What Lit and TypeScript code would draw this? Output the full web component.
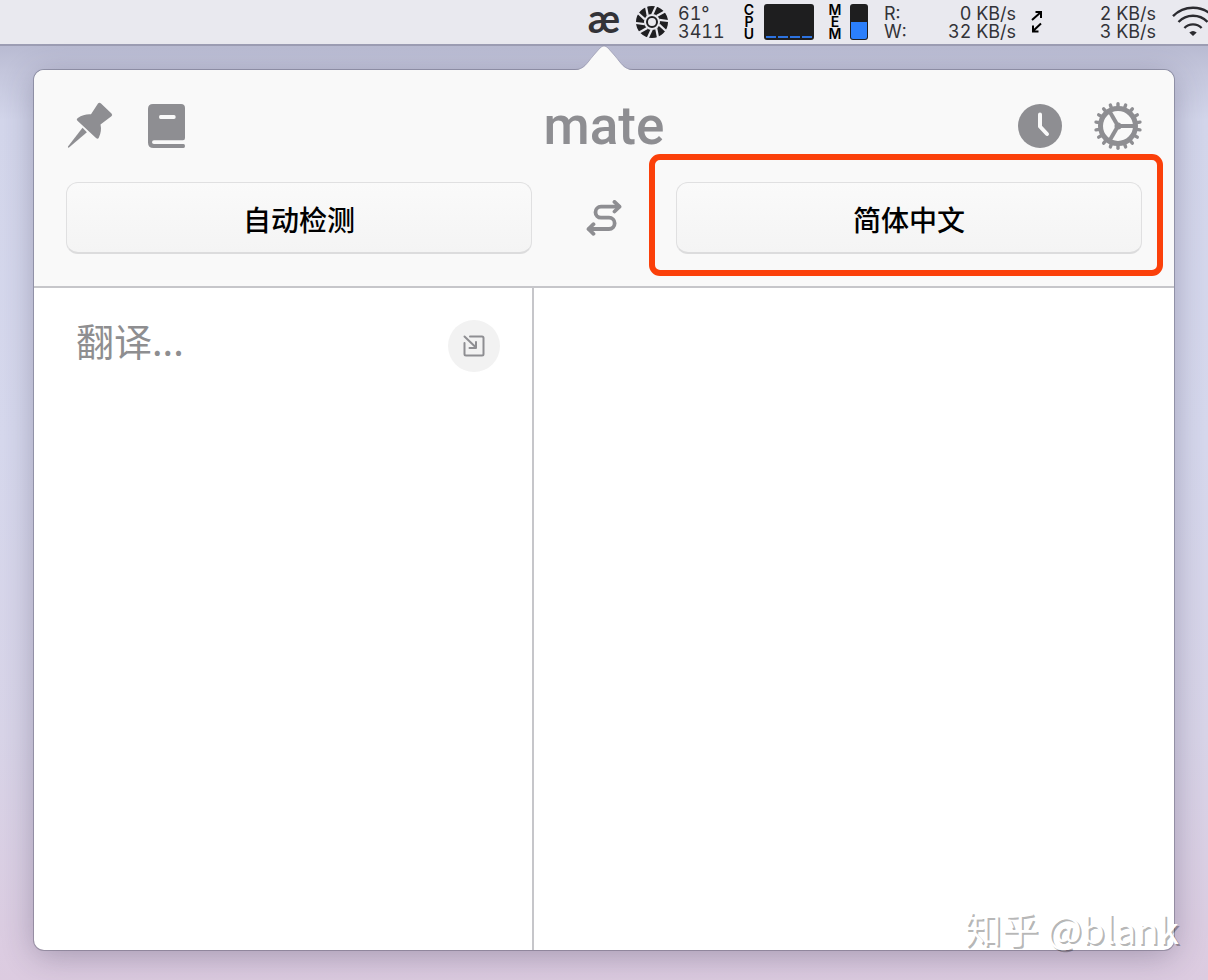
import { LitElement, html, svg, css } from "lit";
import { customElement, state } from "lit/decorators.js";

const spokes = (count: number) => Array.from({ length: count }, (_, i) => (i * 360) / count);

@customElement("menu-bar")
class MenuBar extends LitElement {
  static styles = css`
    :host {
      display: flex;
      justify-content: flex-end;
      align-items: center;
      gap: 14px;
      height: 44px;
      flex: none;
      overflow: hidden;
      background: #e9e9ef;
      border-bottom: 2px solid #9c9db3;
      color: #333338;
      font: 18px/18px Inter, "Liberation Sans", sans-serif;
      font-variant-numeric: tabular-nums;
      white-space: nowrap;
    }
    .logo {
      width: 36px;
      margin-bottom: 8px;
      text-align: center;
      font: 700 40px/36px Lato, sans-serif;
    }
    .group {
      display: flex;
      align-items: center;
      gap: 8px;
    }
    .fan {
      gap: 10px;
    }
    .temp {
      width: 50px;
      padding-top: 2px;
    }
    .tag {
      width: 14px;
      text-align: center;
      color: #000;
      font: 600 14px/12px Inter, sans-serif;
    }
    .cpu {
      display: flex;
      align-items: flex-end;
      gap: 2px;
      width: 50px;
      height: 36px;
      box-sizing: border-box;
      padding: 2px;
      border-radius: 3px;
      background: #1e1e1f;
    }
    .cpu span {
      flex: 1;
      height: 2px;
      background: #2d73e0;
    }
    .mem {
      display: flex;
      align-items: flex-end;
      width: 18px;
      height: 36px;
      box-sizing: border-box;
      padding: 1px;
      border-radius: 3px;
      background: #1e1e1f;
    }
    .mem span {
      flex: 1;
      border-radius: 0 0 2px 2px;
      background: #2b7ffb;
    }
    .disk {
      display: grid;
      grid-template-columns: auto 1fr;
      width: 132px;
      padding: 2px 0 0 2px;
    }
    .num {
      text-align: right;
    }
    .net {
      width: 126px;
      padding-right: 2px;
      justify-content: space-between;
    }
    .net .num {
      padding-top: 2px;
    }
    svg {
      display: block;
      flex: none;
    }
  `;

  private memory = 49;

  render() {
    return html`
      <span class="logo">æ</span>
      <div class="group fan">
        <svg width="32" height="32" viewBox="-16 -16 32 32" fill="none">
          <circle r="12" stroke="#1f1f22" stroke-width="8" />
          ${spokes(10).map(
            (a) => svg`<path d="M-1 -7.500L1.500 -17" stroke="#e9e9ef" stroke-width="2.200" transform="rotate(${a + 10})" />`
          )}
          <circle r="5" stroke="#1f1f22" stroke-width="2" />
        </svg>
        <div class="temp"><div>61°</div><div>3411</div></div>
      </div>
      <div class="group">
        <div class="tag">C<br />P<br />U</div>
        <div class="cpu"><span></span><span></span><span></span><span></span></div>
      </div>
      <div class="group">
        <div class="tag">M<br />E<br />M</div>
        <div class="mem"><span style="height:${this.memory}%"></span></div>
      </div>
      <div class="disk">
        <span>R:</span><span class="num">0 KB/s</span>
        <span>W:</span><span class="num">32 KB/s</span>
      </div>
      <div class="group net">
        <svg width="14" height="24" viewBox="0 0 14 24" fill="none" stroke="#000" stroke-width="2">
          <path d="M2 10L11 2M5.500 2H11V8M11 13.500L2.500 21.500M3 15.500V21.500H8.500" />
        </svg>
        <div class="num"><div>2 KB/s</div><div>3 KB/s</div></div>
      </div>
      <svg width="36" height="44" viewBox="0 0 36 44" fill="none" stroke="#2b2b30" stroke-width="2.4">
        <path d="M1 16.200A28 28 0 0 1 41 16.200M6.500 22A20 20 0 0 1 35.500 22M12.400 28A12 12 0 0 1 29.600 28" />
        <path d="M17.300 32.500Q21 29.500 24.700 32.500L21 36Z" fill="#2b2b30" stroke="none" />
      </svg>
    `;
  }
}

@customElement("translate-popover")
class TranslatePopover extends LitElement {
  static styles = css`
    :host {
      position: relative;
      display: flex;
      flex-direction: column;
      border-radius: 10px;
      background: #fff;
      box-shadow: 0 0 0 1px rgba(70, 70, 90, 0.35), 0 6px 32px rgba(50, 45, 75, 0.32);
      font-family: "Noto Sans CJK SC", sans-serif;
    }
    button {
      padding: 0;
      border: 0;
      background: none;
      color: #8e8e92;
      font-family: inherit;
      cursor: pointer;
    }
    svg {
      display: block;
    }
    .arrow {
      position: absolute;
      left: 50%;
      bottom: 100%;
      margin-left: -30px;
      margin-bottom: -1px;
    }
    header {
      display: flex;
      flex-direction: column;
      gap: 32px;
      padding: 32px;
      border-bottom: 2px solid #c6c6ca;
      border-radius: 10px 10px 0 0;
      background: #f9f9f9;
    }
    .bar {
      display: grid;
      grid-template-columns: 1fr auto 1fr;
      align-items: center;
      height: 48px;
    }
    .tools {
      display: flex;
      align-items: center;
      gap: 32px;
    }
    .end {
      justify-content: flex-end;
    }
    .brand {
      margin: 0;
      color: #8e8e92;
      font: 500 53px/48px Roboto, sans-serif;
    }
    .langs {
      display: grid;
      grid-template-columns: 1fr 144px 1fr;
      align-items: center;
    }
    .slot {
      position: relative;
    }
    .lang {
      display: block;
      width: 100%;
      height: 72px;
      border: 1px solid #e0e0e1;
      border-bottom: 2px solid #dcdcdd;
      border-radius: 12px;
      background: linear-gradient(#fafafa, #f4f4f4);
      color: #000;
      font-size: 28px;
      font-weight: 500;
      line-height: 40px;
      padding-top: 2px;
    }
    .swap {
      justify-self: center;
    }
    .mark {
      position: absolute;
      inset: -28px -21px -22px -27px;
      border: 6px solid #fb400a;
      border-radius: 11px;
      pointer-events: none;
    }
    .panes {
      flex: 1;
      display: grid;
      grid-template-columns: minmax(0, 25fr) minmax(0, 32fr);
    }
    .source {
      display: flex;
      align-items: flex-start;
      padding: 32px 32px 32px 42px;
      border-right: 2px solid #c6c6ca;
    }
    textarea {
      flex: 1;
      min-width: 0;
      align-self: stretch;
      box-sizing: border-box;
      padding: 0;
      border: 0;
      outline: 0;
      resize: none;
      background: none;
      color: #222;
      font: 38px/40px "Noto Sans CJK SC", sans-serif;
    }
    textarea::placeholder {
      color: #8e8e90;
      opacity: 1;
    }
    .paste {
      flex: none;
      display: grid;
      place-items: center;
      width: 52px;
      height: 52px;
      border-radius: 50%;
      background: #f2f2f2;
    }
  `;

  @state() private from = "自动检测";
  @state() private to = "简体中文";

  private swap() {
    [this.from, this.to] = [this.to, this.from];
  }

  render() {
    return html`
      <svg class="arrow" width="60" height="26" viewBox="0 0 60 26">
        <path d="M1 25C10 25 13 18 19 11L26 3Q30 -1 34 3L41 11C47 18 50 25 59 25V26H1Z" fill="#f9f9f9" />
        <path d="M1 24.500C10 24.500 13 18 19 11L26 3Q30 -1 34 3L41 11C47 18 50 24.500 59 24.500" fill="none" stroke="#8f90a6" stroke-opacity=".6" />
      </svg>
      <header>
        <div class="bar">
          <div class="tools">
            <button aria-label="置顶">
              <svg width="48" height="48" viewBox="0 0 48 48" fill="currentColor">
                <path d="M32 1.600Q33.300 0 35 1.500L45.500 11.500Q47 13 45.400 14.300L34.500 22.500Q36 29 32.800 35.800Q31.800 37.500 30 36L11.200 18.500Q10 17 11.800 15.900Q18 11.800 25 12.300Z" />
                <path d="M16.500 25.700L20.900 30.200L3 45.500Q1.500 46 2 44.500Z" />
              </svg>
            </button>
            <button aria-label="词典">
              <svg width="40" height="48" viewBox="0 0 40 48">
                <path fill="currentColor" fill-rule="evenodd" d="M7 2H35Q39 2 39 6V36Q39 38.300 37 38.300H8Q6 38.300 6 40.200Q6 42 8 42H37.500Q39 42 39 44Q39 46 37.500 46H7.500Q2 46 2 40.500V7Q2 2 7 2ZM14.500 13Q13 13 13 15T14.500 17H28Q29.700 17 29.700 15T28 13Z" />
              </svg>
            </button>
          </div>
          <h1 class="brand">mate</h1>
          <div class="tools end">
            <button aria-label="历史">
              <svg width="44" height="44" viewBox="0 0 44 44" fill="none">
                <circle cx="22" cy="22" r="22" fill="currentColor" />
                <path d="M22 10.500V22.500L29 30" stroke="#f9f9f9" stroke-width="4" stroke-linecap="round" stroke-linejoin="round" />
              </svg>
            </button>
            <button aria-label="设置">
              <svg width="48" height="48" viewBox="-24 -24 48 48" fill="none" stroke="currentColor">
                <circle r="17.500" stroke-width="5" />
                ${spokes(18).map(
                  (a) => svg`<path d="M0 -19V-22.300" stroke-width="3.400" stroke-linecap="round" transform="rotate(${a})" />`
                )}
                ${spokes(3).map((a) => svg`<path d="M0 0H17" stroke-width="4" transform="rotate(${a})" />`)}
                <circle r="3.500" fill="currentColor" stroke="none" />
              </svg>
            </button>
          </div>
        </div>
        <div class="langs">
          <div class="slot"><button class="lang">${this.from}</button></div>
          <button class="swap" aria-label="交换" @click=${this.swap}>
            <svg width="36" height="36" viewBox="0 0 36 36" fill="none" stroke="currentColor" stroke-width="3.800" stroke-linecap="round" stroke-linejoin="round">
              <path d="M33 6.700H15A5.500 5.500 0 0 0 15 17.700H23A5.600 5.600 0 0 1 23 29H3" />
              <path d="M28.500 1.900L33.500 6.700L28.500 11.500M7.500 24.200L2.500 29L7.500 33.800" />
            </svg>
          </button>
          <div class="slot">
            <button class="lang">${this.to}</button>
            <div class="mark"></div>
          </div>
        </div>
      </header>
      <div class="panes">
        <div class="source">
          <textarea aria-label="翻译" placeholder="翻译..."></textarea>
          <button class="paste" aria-label="粘贴">
            <svg width="24" height="24" viewBox="0 0 24 24" fill="none" stroke="currentColor" stroke-width="2" stroke-linecap="round" stroke-linejoin="round">
              <path d="M8 2.500H20Q21.500 2.500 21.500 4V20Q21.500 21.500 20 21.500H4Q2.500 21.500 2.500 20V9" />
              <path d="M2.500 2.500L14 13.500M7.500 14H14V8" />
            </svg>
          </button>
        </div>
        <div></div>
      </div>
    `;
  }
}

@customElement("app-root")
class AppRoot extends LitElement {
  static styles = css`
    :host {
      position: relative;
      display: flex;
      flex-direction: column;
      min-height: 100vh;
      overflow: hidden;
      background: linear-gradient(#b9bbd2 46px, #c3c5db 70px, #d3d6eb 120px, #d6d8ed 45%, #d8d4e8 75%, #dccbe0);
    }
    .popover {
      flex: 1;
      margin: 24px 34px 30px;
    }
    .sign {
      position: absolute;
      right: 29px;
      bottom: 28px;
      color: #fff;
      font: 37px/48px "Noto Sans CJK SC", sans-serif;
      text-shadow: 2px 2px 0 rgba(0, 0, 0, 0.3);
    }
  `;

  render() {
    return html`
      <menu-bar></menu-bar>
      <translate-popover class="popover"></translate-popover>
      <div class="sign">知乎 @blank</div>
    `;
  }
}
